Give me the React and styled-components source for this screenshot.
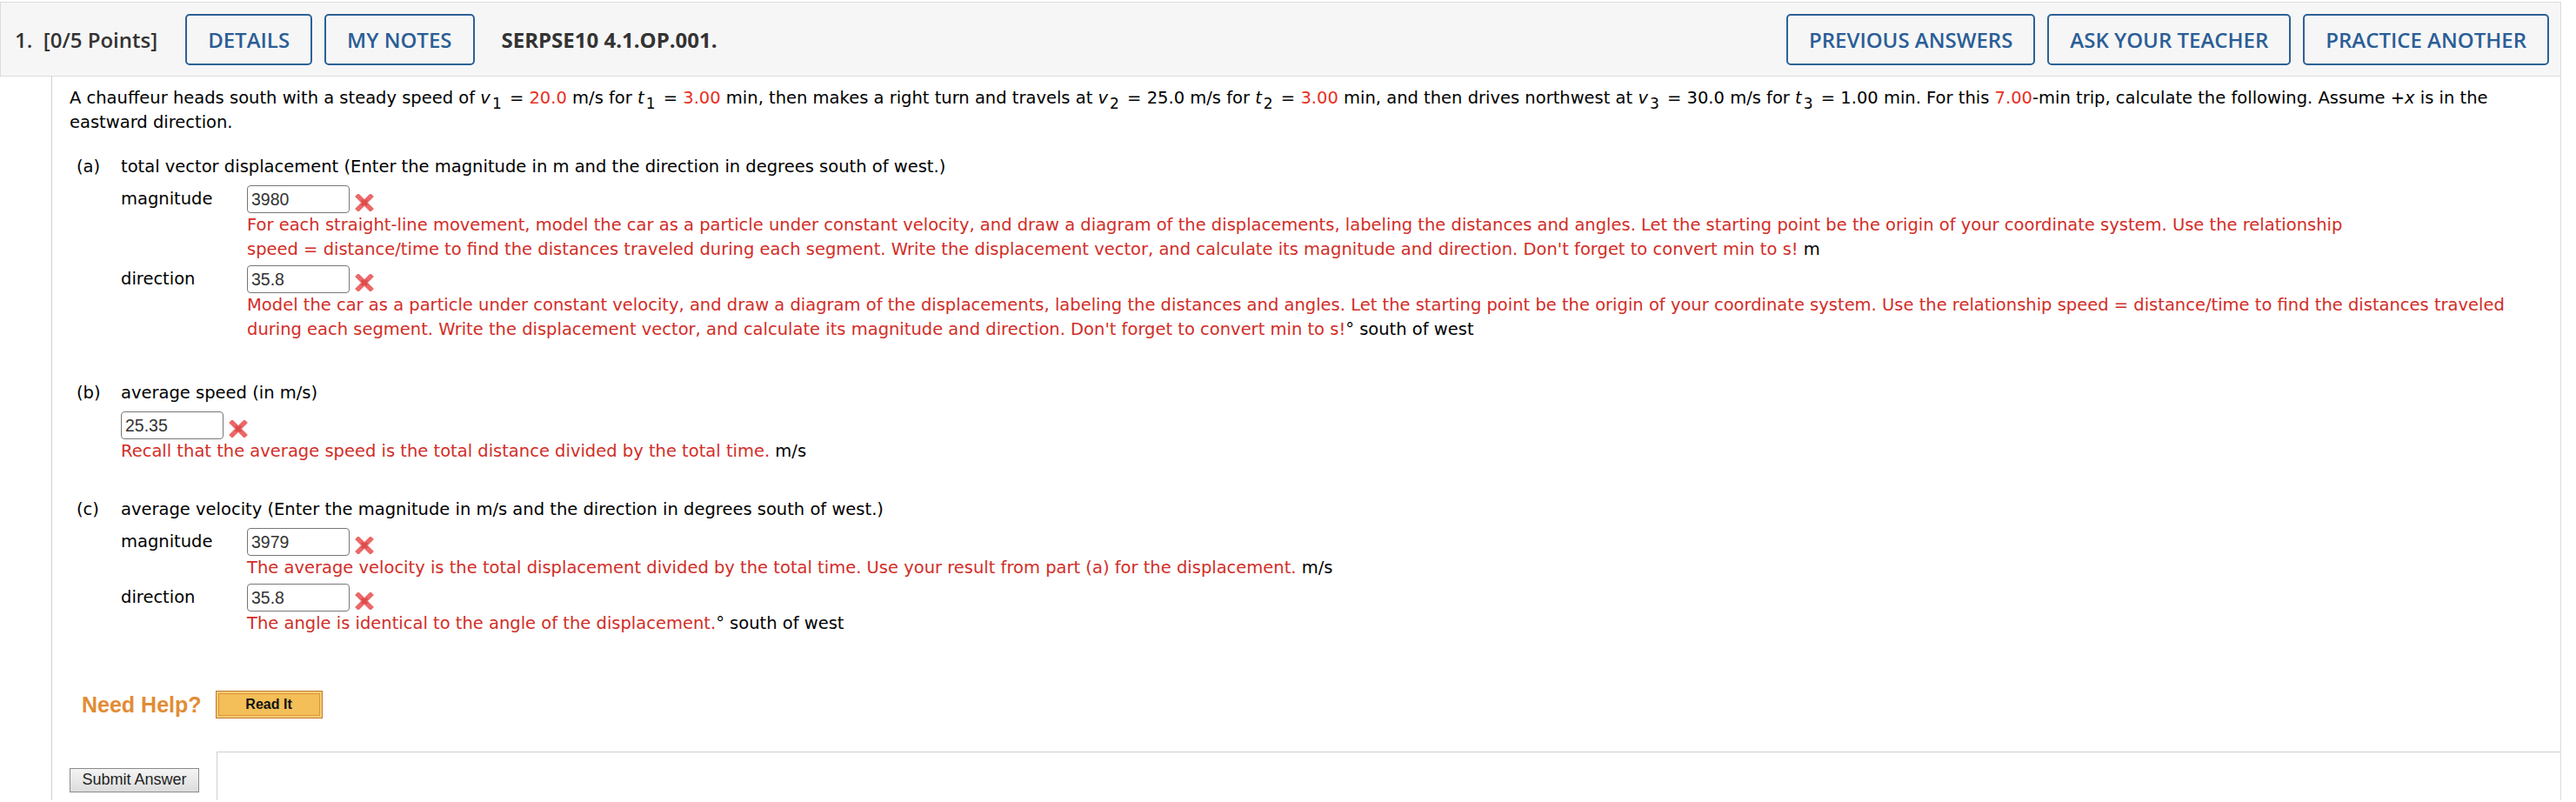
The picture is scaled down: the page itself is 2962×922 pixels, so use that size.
import React from "react";
import styled, { createGlobalStyle } from "styled-components";

const GlobalStyle = createGlobalStyle`
  body {
    margin: 0;
    background: #fff;
    font-family: "DejaVu Sans", Verdana, sans-serif;
    color: #000;
  }
`;

const Page = styled.div`
  width: 2945px;
  padding-top: 2px;
`;

// header bar with the question number and the action buttons
const Header = styled.div`
  height: 84px;
  display: flex;
  align-items: center;
  gap: 14px;
  padding: 0 13px 0 16px;
  background: #f6f6f6;
  border: 1px solid #dcdcdc;
  font-family: "Open Sans", sans-serif;
`;

const Points = styled.span`
  font-size: 24px;
  font-weight: 600;
  color: #333;
  margin-right: 18px;
`;

const Code = styled.span`
  font-size: 24px;
  font-weight: 700;
  color: #333;
  margin-left: 17px;
  flex: 1;
`;

const HeadButton = styled.button`
  height: 59px;
  padding: 0 24px;
  border: 2px solid #2d6197;
  border-radius: 5px;
  background: transparent;
  color: #2b5e96;
  font-family: "Open Sans", sans-serif;
  font-size: 24px;
  font-weight: 600;
  cursor: pointer;
`;

const Panel = styled.div`
  margin-left: 59px;
  border-left: 1px solid #cfcfcf;
  border-right: 1px solid #dcdcdc;
  padding: 11px 48px 0 20px;
  font-size: 19.5px;
  line-height: 28px;
`;

const Intro = styled.p`
  margin: 0;
`;

const Red = styled.span`
  color: ${(p) => (p.$bright ? "#e8301f" : "#d22d27")};
`;

const Var = styled.i`
  font-style: italic;
`;

const Sub = styled.sub`
  font-size: 17px;
  line-height: 0;
  vertical-align: -6px;
  margin: 0 3px 0 2px;
`;

const Part = styled.div`
  margin-top: ${(p) => p.$top}px;
  padding-left: 8px;
`;

const PartHead = styled.div`
  display: grid;
  grid-template-columns: 51px 1fr;
`;

const Fields = styled.div`
  padding-left: 51px;
  margin-top: 7px;
  display: flex;
  flex-direction: column;
  gap: 4px;
`;

const Field = styled.div`
  display: grid;
  grid-template-columns: ${(p) => (p.$plain ? "1fr" : "145px 1fr")};
  align-items: start;
`;

const Label = styled.div`
  height: 32px;
  line-height: 32px;
`;

const AnswerLine = styled.div`
  display: flex;
  align-items: flex-start;
  gap: 6px;
`;

const Answer = styled.input`
  width: 118px;
  height: 32px;
  box-sizing: border-box;
  border: 1px solid #777;
  border-radius: 4px;
  padding: 0 4px;
  font-family: "Liberation Sans", Arial, sans-serif;
  font-size: 19.5px;
  color: #333;
  background: #fff;
`;

const Wrong = styled.svg`
  width: 22px;
  height: 20px;
  margin-top: 10px;
`;

const Hint = styled.div`
  margin-top: 0;
`;

const Cross = () => (
  <Wrong viewBox="0 0 22 20">
    <path d="M4 3 L18 17 M18 3 L4 17" stroke="#ec6868" strokeWidth="5.5" strokeLinecap="square" fill="none" />
    <path d="M8 7 L14 13 M14 7 L8 13" stroke="#dc4a4a" strokeWidth="3" fill="none" />
  </Wrong>
);

const HelpRow = styled.div`
  margin-top: 63px;
  padding-left: 14px;
  display: flex;
  align-items: center;
  gap: 16px;
`;

const NeedHelp = styled.span`
  font-family: "Liberation Sans", Arial, sans-serif;
  font-size: 25px;
  font-weight: 700;
  color: #e28c35;
`;

const ReadIt = styled.button`
  width: 123px;
  height: 32px;
  border: 1px solid #c0782c;
  box-shadow: inset 0 0 0 2px #f7cd73, inset 0 0 0 3px #d9953e;
  background: #f4be58;
  font-family: "Liberation Sans", Arial, sans-serif;
  font-size: 16px;
  font-weight: 700;
  color: #111;
  cursor: pointer;
`;

const Footer = styled.div`
  margin-top: 38px;
  margin-left: -20px;
  display: grid;
  grid-template-columns: 189px 1fr;
  height: 56px;
`;

const SubmitCell = styled.div`
  padding: 18px 0 0 20px;
`;

const Submit = styled.button`
  width: 149px;
  height: 28px;
  border: 1px solid #8a8a8a;
  background: linear-gradient(#f4f4f4, #dcdcdc);
  font-family: "Liberation Sans", Arial, sans-serif;
  font-size: 18px;
  color: #222;
  padding: 0;
  cursor: pointer;
`;

const Blank = styled.div`
  border-top: 1px solid #cfcfcf;
  border-left: 1px solid #cfcfcf;
  margin-right: -48px;
`;

const Row = ({ label, value, children }) => (
  <Field $plain={!label}>
    {label && <Label>{label}</Label>}
    <div>
      <AnswerLine>
        <Answer defaultValue={value} />
        <Cross />
      </AnswerLine>
      <Hint>{children}</Hint>
    </div>
  </Field>
);

export default function App() {
  return (
    <Page>
      <GlobalStyle />
      <Header>
        <Points>1.&nbsp; [0/5 Points]</Points>
        <HeadButton>DETAILS</HeadButton>
        <HeadButton>MY NOTES</HeadButton>
        <Code>SERPSE10 4.1.OP.001.</Code>
        <HeadButton>PREVIOUS ANSWERS</HeadButton>
        <HeadButton>ASK YOUR TEACHER</HeadButton>
        <HeadButton>PRACTICE ANOTHER</HeadButton>
      </Header>

      <Panel>
        <Intro>
          A chauffeur heads south with a steady speed of <Var>v</Var><Sub>1</Sub> = <Red $bright>20.0</Red> m/s for{" "}
          <Var>t</Var><Sub>1</Sub> = <Red $bright>3.00</Red> min, then makes a right turn and travels at{" "}
          <Var>v</Var><Sub>2</Sub> = 25.0 m/s for <Var>t</Var><Sub>2</Sub> = <Red $bright>3.00</Red> min, and then drives
          northwest at <Var>v</Var><Sub>3</Sub> = 30.0 m/s for <Var>t</Var><Sub>3</Sub> = 1.00 min. For this{" "}
          <Red $bright>7.00</Red>-min trip, calculate the following. Assume +<Var>x</Var> is in the eastward direction.
        </Intro>

        <Part $top={23}>
          <PartHead>
            <span>(a)</span>
            <span>total vector displacement (Enter the magnitude in m and the direction in degrees south of west.)</span>
          </PartHead>
          <Fields>
            <Row label="magnitude" value="3980">
              <Red>
                For each straight-line movement, model the car as a particle under constant velocity, and draw a diagram
                of the displacements, labeling the distances and angles. Let the starting point be the origin of your
                coordinate system. Use the relationship speed&nbsp;=&nbsp;distance/time to find the distances traveled
                during each segment. Write the displacement vector, and calculate its magnitude and direction. Don't
                forget to convert min to s!
              </Red>{" "}
              m
            </Row>
            <Row label="direction" value="35.8">
              <Red>
                Model the car as a particle under constant velocity, and draw a diagram of the displacements, labeling
                the distances and angles. Let the starting point be the origin of your coordinate system. Use the
                relationship speed = distance/time to find the distances traveled during each segment. Write the
                displacement vector, and calculate its magnitude and direction. Don't forget to convert min to s!
              </Red>
              ° south of west
            </Row>
          </Fields>
        </Part>

        <Part $top={45}>
          <PartHead>
            <span>(b)</span>
            <span>average speed (in m/s)</span>
          </PartHead>
          <Fields>
            <Row value="25.35">
              <Red>Recall that the average speed is the total distance divided by the total time.</Red> m/s
            </Row>
          </Fields>
        </Part>

        <Part $top={39}>
          <PartHead>
            <span>(c)</span>
            <span>average velocity (Enter the magnitude in m/s and the direction in degrees south of west.)</span>
          </PartHead>
          <Fields>
            <Row label="magnitude" value="3979">
              <Red>
                The average velocity is the total displacement divided by the total time. Use your result from part (a)
                for the displacement.
              </Red>{" "}
              m/s
            </Row>
            <Row label="direction" value="35.8">
              <Red>The angle is identical to the angle of the displacement.</Red>° south of west
            </Row>
          </Fields>
        </Part>

        <HelpRow>
          <NeedHelp>Need Help?</NeedHelp>
          <ReadIt>Read It</ReadIt>
        </HelpRow>

        <Footer>
          <SubmitCell>
            <Submit>Submit Answer</Submit>
          </SubmitCell>
          <Blank />
        </Footer>
      </Panel>
    </Page>
  );
}
